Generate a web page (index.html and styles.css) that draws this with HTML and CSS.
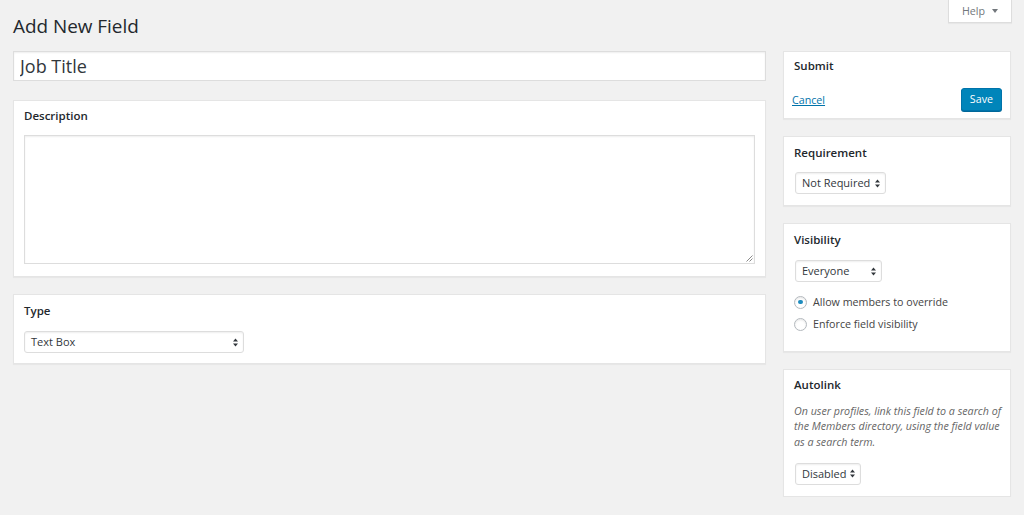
FILE: index.html
```html
<!DOCTYPE html>
<html lang="en">
<head>
<meta charset="utf-8">
<title>Add New Field</title>
<link rel="stylesheet" href="styles.css">
</head>
<body>
<div class="page">
  <header class="top">
    <h1 class="page-title">Add New Field</h1>
    <div class="help-tab">Help <svg class="help-caret" width="6" height="4" viewBox="0 0 6 4"><path d="M0 0 L6 0 L3 4 Z" fill="#72777c"/></svg></div>
  </header>
  <div class="columns">
    <div class="main">
      <input class="title-input" type="text" value="Job Title">
      <section class="box box-desc">
        <h2 class="box-title">Description</h2>
        <div class="textarea">
          <svg class="grip" width="8" height="8" viewBox="0 0 8 8"><path d="M7.5 1.5 L1.5 7.5 M7.5 4.5 L4.5 7.5" stroke="#8a8a8a" stroke-width="1"/></svg>
        </div>
      </section>
      <section class="box box-type">
        <h2 class="box-title">Type</h2>
        <div class="select select-type"><span>Text Box</span><svg class="arrows" width="5" height="9" viewBox="0 0 5 9"><path d="M0 3.6 L2.5 0.4 L5 3.6 Z M0 5.4 L2.5 8.6 L5 5.4 Z" fill="#32373c"/></svg></div>
      </section>
    </div>
    <aside class="side">
      <section class="box box-side box-submit">
        <h2 class="box-title">Submit</h2>
        <div class="submit-row">
          <a class="cancel" href="#">Cancel</a>
          <button class="save" type="button">Save</button>
        </div>
      </section>
      <section class="box box-side box-req">
        <h2 class="box-title">Requirement</h2>
        <div class="select select-req"><span>Not Required</span><svg class="arrows" width="5" height="9" viewBox="0 0 5 9"><path d="M0 3.6 L2.5 0.4 L5 3.6 Z M0 5.4 L2.5 8.6 L5 5.4 Z" fill="#32373c"/></svg></div>
      </section>
      <section class="box box-side box-vis">
        <h2 class="box-title">Visibility</h2>
        <div class="select select-vis"><span>Everyone</span><svg class="arrows" width="5" height="9" viewBox="0 0 5 9"><path d="M0 3.6 L2.5 0.4 L5 3.6 Z M0 5.4 L2.5 8.6 L5 5.4 Z" fill="#32373c"/></svg></div>
        <div class="radios">
          <div class="radio-row"><span class="radio checked"></span>Allow members to override</div>
          <div class="radio-row"><span class="radio"></span>Enforce field visibility</div>
        </div>
      </section>
      <section class="box box-side box-auto">
        <h2 class="box-title">Autolink</h2>
        <p class="auto-desc">On user profiles, link this field to a search of the Members directory, using the field value as a search term.</p>
        <div class="select select-auto"><span>Disabled</span><svg class="arrows" width="5" height="9" viewBox="0 0 5 9"><path d="M0 3.6 L2.5 0.4 L5 3.6 Z M0 5.4 L2.5 8.6 L5 5.4 Z" fill="#32373c"/></svg></div>
      </section>
    </aside>
  </div>
</div>
</body>
</html>
```

FILE: styles.css
```css
* { box-sizing: border-box; }

html, body {
  margin: 0;
  padding: 0;
  background: #f1f1f1;
}

body {
  font-family: "Open Sans", "Liberation Sans", sans-serif;
  font-size: 10.7px;
  color: #444;
}

.page {
  padding: 0 13px;
}

.top {
  display: flex;
  justify-content: space-between;
  align-items: flex-start;
  height: 51px;
}

.page-title {
  margin: 0;
  padding-top: 13px;
  font-size: 18.9px;
  line-height: 26px;
  font-weight: 400;
  color: #23282d;
}

.help-tab {
  display: flex;
  align-items: center;
  height: 23px;
  margin-right: -1px;
  padding: 0 13px 1px 13px;
  background: #fff;
  border: 1px solid #ddd;
  border-top: none;
  box-shadow: 0 1px 1px rgba(0,0,0,.04);
  color: #72777c;
  font-size: 10.7px;
  line-height: 20px;
}

.help-caret {
  margin-left: 7px;
}

.columns {
  display: flex;
  align-items: flex-start;
  gap: 17px;
}

.main {
  flex: 1;
  display: flex;
  flex-direction: column;
}

.side {
  width: 228px;
  flex-shrink: 0;
  display: flex;
  flex-direction: column;
  gap: 17px;
}

.title-input {
  display: block;
  width: 100%;
  height: 30px;
  margin: 0 0 19px;
  padding: 0 6px;
  border: 1px solid #ddd;
  box-shadow: inset 0 1px 2px rgba(0,0,0,.07);
  background: #fff;
  font-family: "Open Sans", "Liberation Sans", sans-serif;
  font-size: 18px;
  color: #32373c;
  outline: none;
}

.box {
  background: #fff;
  border: 1px solid #e5e5e5;
  box-shadow: 0 1px 1px rgba(0,0,0,.04);
  padding: 0 10px;
}

.box-title {
  margin: 0;
  padding-top: 7px;
  font-size: 11.5px;
  line-height: 16px;
  font-weight: 600;
  color: #23282d;
}

.box-side .box-title {
  padding-top: 6px;
}

.box-desc {
  padding-bottom: 12px;
  margin-bottom: 17px;
}

.box-desc .box-title {
  margin-bottom: 11px;
}

.textarea {
  position: relative;
  height: 129px;
  border: 1px solid #ddd;
  box-shadow: inset 0 1px 2px rgba(0,0,0,.07);
  background: #fff;
}

.grip {
  position: absolute;
  right: 1px;
  bottom: 1px;
}

.box-type {
  padding-bottom: 10px;
}

.box-type .box-title {
  padding-top: 8px;
  margin-bottom: 12px;
}

.select {
  display: flex;
  align-items: center;
  justify-content: space-between;
  gap: 3px;
  height: 22px;
  padding: 0 5px 0 6px;
  border: 1px solid #ddd;
  border-radius: 3px;
  box-shadow: inset 0 1px 2px rgba(0,0,0,.07);
  background: #fff;
  color: #32373c;
  font-size: 11px;
  line-height: 20px;
  white-space: nowrap;
}

.arrows {
  flex-shrink: 0;
}

.select-type { width: 220px; margin-left: 0; }
.select-req { width: 91px; margin-left: 1px; }
.select-vis { width: 87px; margin-left: 1px; }
.select-auto { width: 66px; margin-left: 1px; }

.box-submit {
  padding: 0 8px 7px 10px;
}

.submit-row {
  display: flex;
  justify-content: space-between;
  align-items: center;
  margin-top: 14px;
}

.cancel {
  margin-left: -2px;
  color: #0073aa;
  text-decoration: underline;
  font-size: 10.7px;
}

.save {
  height: 23px;
  padding: 0 8px 1px;
  background: #0085ba;
  border: 1px solid #0073aa;
  border-radius: 3px;
  box-shadow: 0 1px 0 #006799;
  color: #fff;
  font-family: "Open Sans", "Liberation Sans", sans-serif;
  font-size: 10.7px;
  line-height: 20px;
}

.box-req {
  padding-bottom: 11px;
}

.box-req .box-title {
  padding-top: 8px;
  margin-bottom: 11px;
}

.box-vis {
  padding-bottom: 16px;
}

.box-vis .box-title {
  padding-top: 8px;
  margin-bottom: 12px;
}

.radios {
  margin-top: 9px;
}

.radio-row {
  display: flex;
  align-items: center;
  height: 22px;
  line-height: 22px;
  color: #444;
}

.radio {
  position: relative;
  width: 13px;
  height: 13px;
  margin-right: 6px;
  border: 1px solid #b4b9be;
  border-radius: 50%;
  background: #fff;
  box-shadow: inset 0 1px 2px rgba(0,0,0,.1);
  flex-shrink: 0;
}

.radio.checked::after {
  content: "";
  position: absolute;
  left: 3.3px;
  top: 3.3px;
  width: 4.4px;
  height: 4.4px;
  border-radius: 50%;
  background: #1e8cbe;
}

.box-auto {
  padding-bottom: 11px;
}

.box-auto .box-title {
  padding-top: 7px;
}

.auto-desc {
  margin: 11px -4px 13px 0;
  font-style: italic;
  font-size: 10.7px;
  line-height: 15.3px;
  color: #666;
}
```
